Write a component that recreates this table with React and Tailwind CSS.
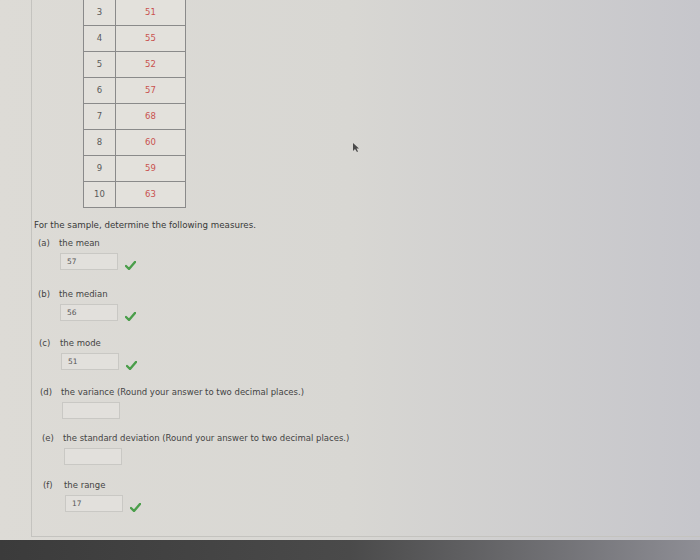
import React from 'react';

const rows = [
    [3, 51], [4, 55], [5, 52], [6, 57], [7, 68], [8, 60], [9, 59], [10, 63],
];

// the photo is a little skewed, so every part sits a pixel further right
const parts = [
    { tag: '(a)', label: 'the mean', value: '57', ok: true, box: 'mt-[6px] ml-[6px]' },
    { tag: '(b)', label: 'the median', value: '56', ok: true, box: 'mt-[18px] ml-[6px]' },
    { tag: '(c)', label: 'the mode', value: '51', ok: true, box: 'mt-[16px] ml-[7px]' },
    { tag: '(d)', label: 'the variance (Round your answer to two decimal places.)', value: '', ok: false, box: 'mt-[16px] ml-[8px]' },
    { tag: '(e)', label: 'the standard deviation (Round your answer to two decimal places.)', value: '', ok: false, box: 'mt-[13px] ml-[10px]' },
    { tag: '(f)', label: 'the range', value: '17', ok: true, box: 'mt-[14px] ml-[11px]' },
];

function Check() {
    return (
        <svg width="11" height="9" viewBox="0 0 11 9" className="ml-[7px] mt-[8px]">
            <path d="M1 5 L4 8 L10 1" fill="none" stroke="#4a9e4a" strokeWidth="2.4" strokeLinecap="round" strokeLinejoin="round" />
        </svg>
    );
}

function Part({ tag, label, value, ok, box }) {
    return (
        <div className={box}>
            <div className="flex text-[8.5px] leading-[12px] text-[#444]">
                <span className="w-[21px] shrink-0">{tag}</span>
                <span>{label}</span>
            </div>
            <div className="flex mt-[4px] ml-[22px]">
                <div className="w-[58px] h-[17px] border border-[#c9c8c4] bg-[#e2e0dc] flex items-center pl-[6px] text-[7.5px] text-[#555]">
                    {value}
                </div>
                {ok && <Check />}
            </div>
        </div>
    );
}

export default function App() {
    return (
        <div
            className="relative w-[700px] h-[560px] overflow-hidden flex flex-col bg-gradient-to-r from-[#dddbd6] via-[#d8d7d3] to-[#c6c6cb]"
            style={{ fontFamily: '"DejaVu Sans", Verdana, sans-serif' }}
        >
            <div className="h-[540px] flex">
                <div className="w-[31px] shrink-0" />
                <div className="flex-1 border-l border-b border-[#c4c3bf] h-[537px] flex flex-col">
                    {/* data table */}
                    <div className="ml-[51px] w-[103px] border-l border-r border-[#8a8a8a]">
                        {rows.map(([x, y]) => (
                            <div key={x} className="flex h-[26px] border-b border-[#8a8a8a] bg-[#e3e1dc]">
                                <div className="w-[32px] border-r border-[#8a8a8a] flex items-center justify-center text-[8.5px] text-[#5a5a5a]">
                                    {x}
                                </div>
                                <div className="flex-1 flex items-center justify-center text-[8.5px] text-[#c9514f]">
                                    {y}
                                </div>
                            </div>
                        ))}
                    </div>

                    <p className="mt-[11px] ml-[2px] text-[8.7px] text-[#383838] leading-[12px]">
                        For the sample, determine the following measures.
                    </p>

                    {parts.map((p) => (
                        <Part key={p.tag} {...p} />
                    ))}
                </div>
            </div>
            <div className="h-[20px] bg-gradient-to-r from-[#3b3b3b] via-[#4a4a4a] to-[#8e8e95]" />

            {/* mouse pointer left on the screen */}
            <svg width="8" height="11" viewBox="0 0 8 11" className="absolute left-[352px] top-[142px]">
                <path d="M1 1 L1 9 L3 7 L5 10 L6 9.5 L4.5 6.5 L7 6.5 Z" fill="#4a4a4a" />
            </svg>
        </div>
    );
}
